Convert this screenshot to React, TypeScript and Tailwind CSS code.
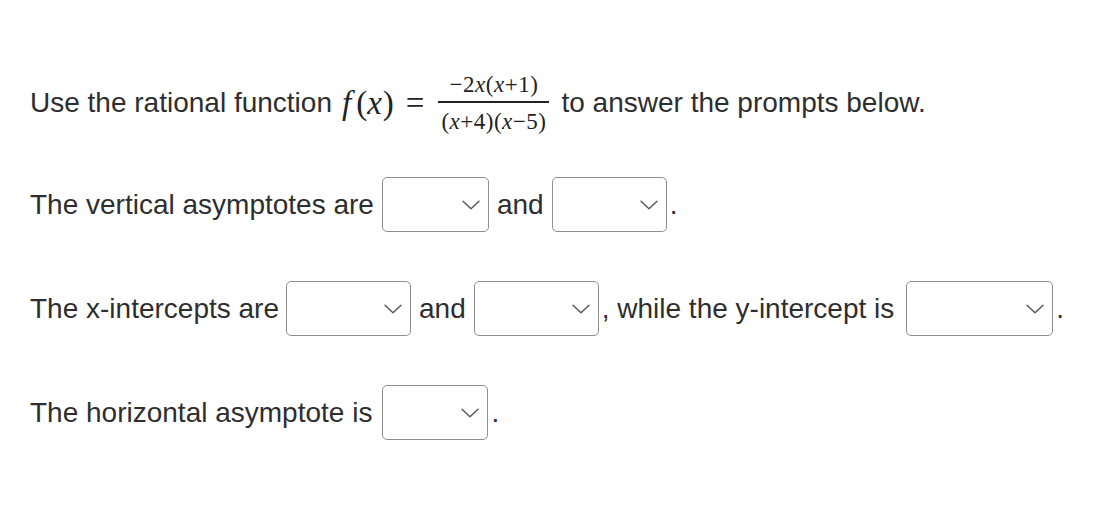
import React from "react";

function Select({ w }: { w: string }) {
  return (
    <span
      className={`relative inline-flex h-[55px] ${w} shrink-0 items-center justify-end rounded-[5px] border-[1.5px] border-[#8e8e8e] bg-white pr-[8px]`}
    >
      <svg width="18" height="10" viewBox="0 0 18 10" fill="none">
        <path d="M1 1.2 L9 8.8 L17 1.2" stroke="#555" strokeWidth="1.4" strokeLinecap="round" strokeLinejoin="round" />
      </svg>
    </span>
  );
}

const serif = "font-['Liberation_Serif','Times_New_Roman',serif]";

export default function App() {
  return (
    <div className="min-h-[512px] w-[1118px] bg-white pl-[30px] font-['Liberation_Sans',Arial,sans-serif] text-[28px] text-[#2e2e2e]">
      <div className="flex h-[60px] items-center pt-[73px] box-content">
        <span>Use the rational function</span>
        <span className={`${serif} ml-[10px] text-[33px] leading-none text-[#222]`}>
          <i>f</i>
          <span className="ml-[5px]">(</span>
          <i>x</i>
          <span className="ml-[1px]">)</span>
          <span className="ml-[12px] mr-[14px]">=</span>
        </span>
        <span className={`${serif} inline-flex flex-col items-center text-[23px] leading-none text-[#222]`}>
          <span className="px-[8px] pb-[5px] tracking-[0.5px]">
            −2<i>x</i>(<i>x</i>+1)
          </span>
          <span className="h-[2px] w-full bg-[#222]" />
          <span className="px-[3px] pt-[7px] tracking-[0.5px]">
            (<i>x</i>+4)(<i>x</i>−5)
          </span>
        </span>
        <span className="ml-[12px]">to answer the prompts below.</span>
      </div>

      <div className="mt-[44px] flex h-[55px] items-center">
        <span className="mr-[8px]">The vertical asymptotes are</span>
        <Select w="w-[107px]" />
        <span className="mx-[8px]">and</span>
        <Select w="w-[115px]" />
        <span className="ml-[3px]">.</span>
      </div>

      <div className="mt-[49px] flex h-[55px] items-center">
        <span className="mr-[7px]">The x-intercepts are</span>
        <Select w="w-[125px]" />
        <span className="mx-[8px]">and</span>
        <Select w="w-[125px]" />
        <span className="ml-[3px]">, while the y-intercept is</span>
        <span className="ml-[12px]" />
        <Select w="w-[147px]" />
        <span className="ml-[3px]">.</span>
      </div>

      <div className="mt-[49px] flex h-[55px] items-center">
        <span className="mr-[10px]">The horizontal asymptote is</span>
        <Select w="w-[106px]" />
        <span className="ml-[3px]">.</span>
      </div>
    </div>
  );
}
